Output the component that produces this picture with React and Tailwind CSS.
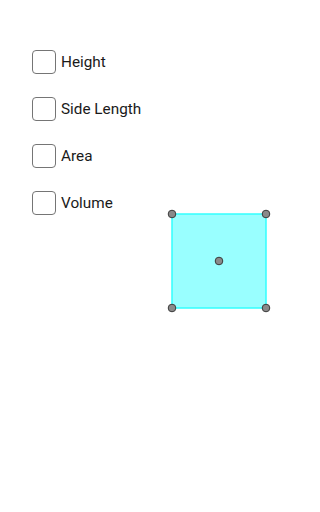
const items = ['Height', 'Side Length', 'Area', 'Volume']

const Point = ({ cx, cy }) => (
  <circle cx={cx} cy={cy} r="3.8" fill="#8a8a8a" stroke="#3a3a3a" strokeWidth="1" />
)

export default function App() {
  return (
    <div className="relative w-[320px] h-[512px] bg-white overflow-hidden" style={{ fontFamily: 'Roboto, "Liberation Sans", sans-serif' }}>
      <div className="flex flex-col gap-[23px] pt-[50px] pl-[32px]">
        {items.map((label) => (
          <label key={label} className="flex items-center gap-[5px] h-[24px]">
            <span className="w-[24px] h-[24px] rounded-[4px] border border-[#757575] bg-white" />
            <span className="text-[15.3px] text-[#1a1a1a] leading-none pt-[1px]">{label}</span>
          </label>
        ))}
      </div>
      <svg className="absolute left-0 top-0" width="320" height="512">
        <rect x="172" y="214" width="94" height="94" fill="#99ffff" stroke="#33ffff" strokeWidth="1.5" />
        <Point cx={172} cy={214} />
        <Point cx={266} cy={214} />
        <Point cx={172} cy={308} />
        <Point cx={266} cy={308} />
        <Point cx={219} cy={261} />
      </svg>
    </div>
  )
}
